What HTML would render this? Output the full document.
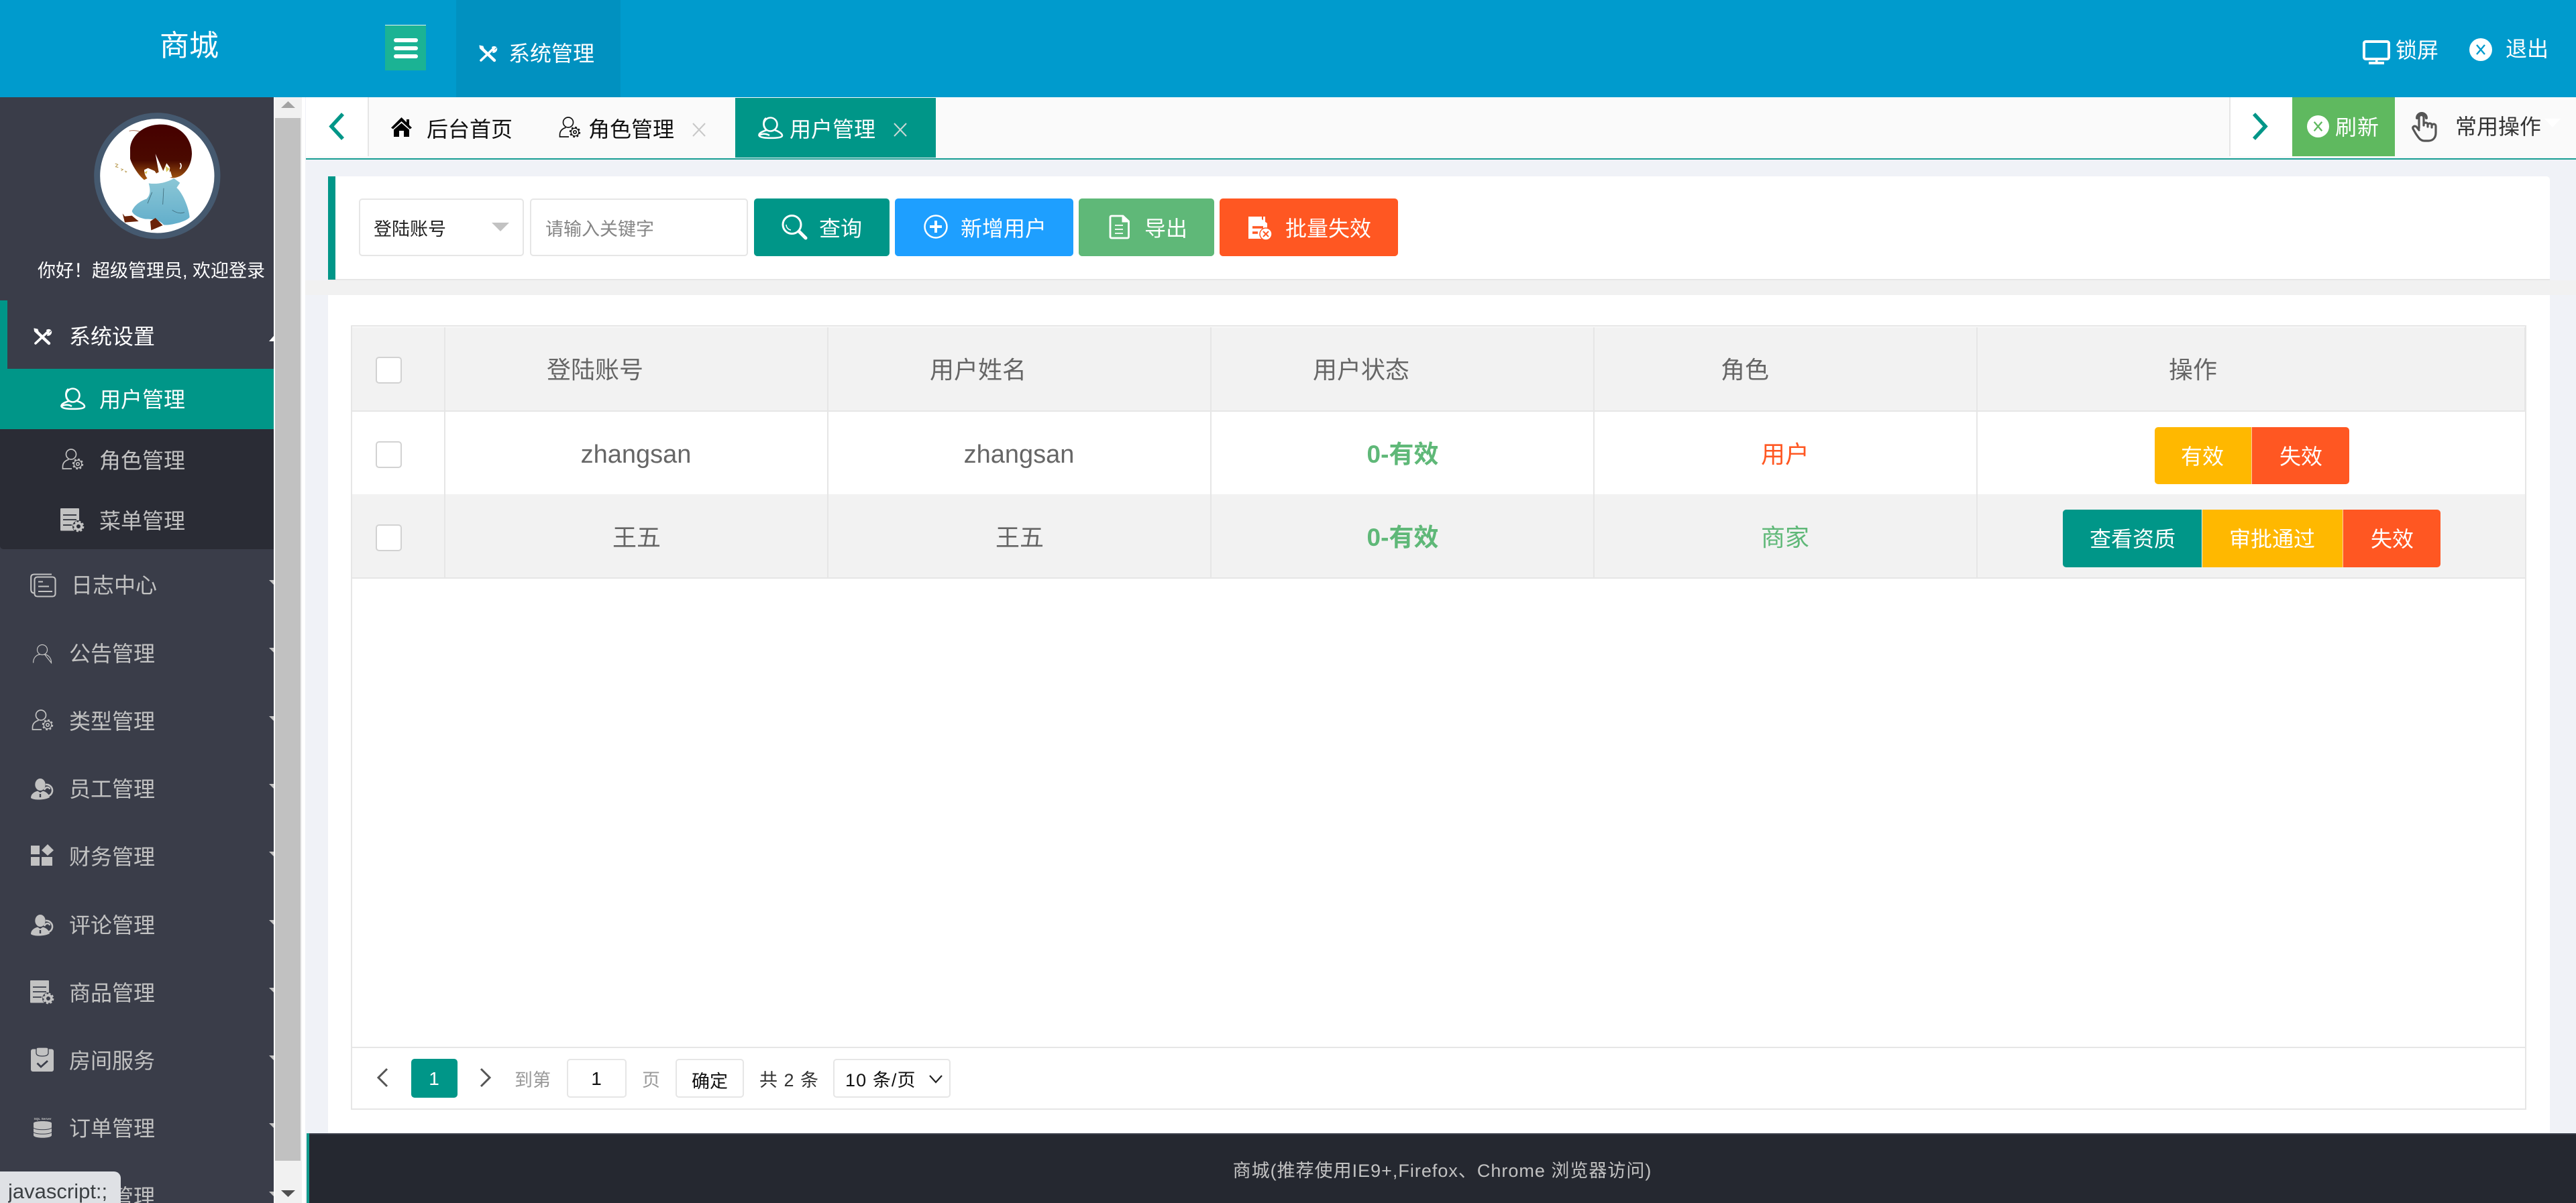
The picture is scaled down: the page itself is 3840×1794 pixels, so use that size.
<!DOCTYPE html>
<html lang="zh-CN"><head><meta charset="utf-8"><title>商城</title>
<style>
html,body{margin:0;padding:0;background:#f0f2f7;width:3840px;height:1794px;overflow:hidden}
body{font-family:"Liberation Sans","Noto Sans CJK SC",sans-serif}
#w{position:absolute;left:0;top:0;width:3840px;height:1794px;overflow:hidden}
.r{position:absolute}
.t{position:absolute;white-space:nowrap;height:60px;line-height:60px;font-size:32px}
.c{transform:translateX(-50%)}
svg{position:absolute;overflow:visible}
.n{color:#c2c2c2}
.h{color:#666;font-size:36px}
.b{border-radius:5px}
</style></head><body><div id="w">
<svg width="0" height="0" style="position:absolute">
<defs>
<symbol id="tools" viewBox="0 0 28 26" overflow="visible"><g fill="none" stroke="currentColor" stroke-linecap="round"><path d="M5 5L24 23" stroke-width="4.4"/><path d="M22 6L4 23" stroke-width="3.6"/><path d="M20.5 3.5a5.5 5.5 0 0 1 6 0l-3.3 3 1.4 1.4 3-2.6a5.5 5.5 0 0 1-6 6" fill="currentColor" stroke-width="1.2"/><path d="M2 1L7 2 9 8 6.500 8.500 2.500 5z" fill="currentColor" stroke-width="1"/></g></symbol>
<symbol id="user2" viewBox="0 0 37 33" overflow="visible"><g fill="none" stroke="currentColor" stroke-width="2.600"><circle cx="18.500" cy="11.500" r="10"/><path d="M12 2C7 6 7 15 13.500 20.500"/><path d="M13 20C6 22 1 25 1.500 28 3 31.500 12 31.800 19 31.800S36 31.500 36 28C36 25 30 21.500 25 20"/><path d="M1.500 28C6 25 13 25 17 28"/></g></symbol>
<symbol id="ug" viewBox="0 0 32 31" overflow="visible"><g fill="none" stroke="currentColor" stroke-width="1.700"><circle cx="14" cy="8.500" r="7.500"/><path d="M15 30H1.500V27C1.500 21.500 5 18 10.500 16.200"/><circle cx="24" cy="23" r="2.200"/><circle cx="24" cy="23" r="5.800" stroke-width="1.300"/><circle cx="24" cy="23" r="7.200" stroke-width="2" stroke-dasharray="2.800 2.850"/></g></symbol>
<symbol id="docg" viewBox="0 0 36 35" overflow="visible"><rect x="0" y="0" width="28" height="33.500" rx="1" fill="currentColor"/><g stroke="var(--bg)" stroke-width="1.700"><path d="M4 10H24M4 17H24M4 25H17"/></g><circle cx="27" cy="27" r="9" fill="var(--bg)"/><circle cx="27" cy="27" r="4.800" fill="none" stroke="currentColor" stroke-width="3.600"/><circle cx="27" cy="27" r="7" fill="none" stroke="currentColor" stroke-width="2.800" stroke-dasharray="3 2.500"/></symbol>
<symbol id="log" viewBox="0 0 39 36" overflow="visible"><g fill="none" stroke="currentColor" stroke-width="2.100"><path d="M32 1.500H6Q1.200 1.500 1.200 6V24Q1.200 29 5.500 29.500"/><rect x="6.500" y="5.500" width="31" height="29" rx="4"/><path d="M12 12.500H19M12 19.500H28M12 27H33"/></g></symbol>
<symbol id="u1" viewBox="0 0 28 28" overflow="visible"><g fill="none" stroke="currentColor" stroke-width="1.200"><circle cx="14" cy="8" r="7.500"/><path d="M.6 27.500C.6 20 5 15.500 10.500 15M17.500 15C23 15.500 27.500 20 27.500 27.500Z"/></g></symbol>
<symbol id="suit" viewBox="0 0 34 32" overflow="visible"><ellipse cx="14" cy="9" rx="7.700" ry="9" fill="currentColor"/><path d="M0 29C0 23 5 20 10 18.500L14 21 18 18.500C23 20 27 23 28 28 22 32 5 33 0 29Z" fill="currentColor"/><path d="M14 23V28" stroke="var(--bg)" stroke-width="2.400"/><path d="M22 9A9 9 0 0 1 32 19 9 9 0 0 1 26 26" fill="none" stroke="currentColor" stroke-width="2.600"/><path d="M20 17C22 12 28 12 28 16" fill="none" stroke="currentColor" stroke-width="2.400"/></symbol>
<symbol id="squares" viewBox="0 0 34 32" overflow="visible"><g fill="currentColor"><rect y="2" width="13" height="13"/><rect y="19" width="13" height="13"/><rect x="16" y="19" width="16" height="13"/><path d="M25 0l9 9-9 8-9-8z"/></g></symbol>
<symbol id="clip" viewBox="0 0 34 36" overflow="visible"><rect y="2.500" width="34" height="33.500" rx="3" fill="currentColor"/><path d="M8 2.500C8 0 10 0 12 0H22C24 0 26 0 26 2.500V8C26 12 22 13 17 13S8 12 8 8Z" fill="currentColor" stroke="var(--bg)" stroke-width="1.300"/><path d="M9.500 23.500L15 29 25 20" fill="none" stroke="var(--bg)" stroke-width="2.800"/></symbol>
<symbol id="db" viewBox="0 0 27 32" overflow="visible"><text x="13.500" y="3.800" font-size="4.800" text-anchor="middle" fill="currentColor" font-weight="700" font-family="Liberation Sans">SQL Server</text><path d="M0 9C0 5 27 5 27 9V27C27 32 0 32 0 27Z" fill="currentColor"/><g fill="none" stroke="var(--bg)" stroke-width="1"><path d="M0 16C4 19.500 23 19.500 27 16M0 22.500C4 26 23 26 27 22.500"/></g></symbol>
<symbol id="xc" viewBox="0 0 34 34" overflow="visible"><circle cx="17" cy="17" r="17" fill="#fff"/><path d="M11 10L23 24M23 10L11 24" stroke="var(--bg)" stroke-width="2.400" fill="none"/></symbol>
</defs></svg>

<!-- top header -->
<div class="r" style="left:0;top:0;width:3840px;height:145px;background:#009bcd"></div>
<div class="t" style="left:238px;top:39px;font-size:44px;color:#fff">商城</div>
<div class="r" style="left:574px;top:37px;width:61px;height:68px;background:#1bb394;border-top:1px solid #e8f4f2;box-sizing:border-box"></div>
<div class="r" style="left:587px;top:57px;width:36px;height:6px;border-radius:3px;background:#fff"></div>
<div class="r" style="left:587px;top:69px;width:36px;height:6px;border-radius:3px;background:#fff"></div>
<div class="r" style="left:587px;top:81px;width:36px;height:6px;border-radius:3px;background:#fff"></div>
<div class="r" style="left:680px;top:0;width:245px;height:145px;background:#0191c0"></div>
<svg style="left:713px;top:67px;color:#fff" width="28" height="26"><use href="#tools"/></svg>
<div class="t" style="left:758px;top:50px;color:#fff">系统管理</div>
<svg style="left:3522px;top:60px" width="41" height="36" viewBox="0 0 41 36"><rect x="2" y="2" width="37" height="26" rx="2.500" fill="none" stroke="#fff" stroke-width="4"/><rect x="19" y="29" width="3.500" height="4" fill="#fff"/><rect x="9" y="32" width="23" height="4" fill="#fff"/></svg>
<div class="t" style="left:3571px;top:45px;color:#fff">锁屏</div>
<svg style="left:3681px;top:57px;--bg:#009bcd" width="34" height="34"><use href="#xc"/></svg>
<div class="t" style="left:3735px;top:43px;color:#fff">退出</div>

<!-- sidebar -->
<div class="r" style="left:0;top:145px;width:408px;height:1649px;background:#3a3d49;overflow:hidden">
<svg style="left:100px;top:-5px" width="300" height="240" viewBox="0 0 900 720">
<defs><linearGradient id="hg" x1="0" y1="0" x2="0" y2="1"><stop offset="0" stop-color="#460000"/><stop offset=".65" stop-color="#4a0a00"/><stop offset="1" stop-color="#a85a10"/></linearGradient><linearGradient id="hd" x1="0" y1="0" x2="0" y2="1"><stop offset="0" stop-color="#8cc7d6"/><stop offset="1" stop-color="#62aecb"/></linearGradient><clipPath id="cc"><circle cx="404" cy="367" r="256"/></clipPath></defs>
<circle cx="403" cy="367" r="269" fill="#fff" stroke="#45596f" stroke-width="27"/>
<g clip-path="url(#cc)">
<path d="M278 166Q300 160 330 170" fill="none" stroke="#a86a50" stroke-width="3"/>
<path d="M282 250C282 190 340 137 420 137C510 137 560 205 558 270C556 320 530 355 505 368C490 375 470 380 455 372L460 330 445 310 430 345 395 268 410 350 345 385C320 365 290 320 282 290Z" fill="url(#hg)"/>
<path d="M345 340L362 332 392 345 395 350C410 375 440 375 462 345L470 372 380 392C360 385 345 365 345 340Z" fill="#fff"/>
<path d="M345 352l14-8-4 14z M440 322l18 14-14 14z" fill="#d8c658"/>
<path d="M505 310q10 10 0 26" fill="none" stroke="#fff" stroke-width="5"/>
<path d="M365 400C400 405 440 400 478 378L505 398 490 420C515 440 545 510 548 552 530 575 450 590 432 586 412 562 380 560 352 560 320 555 295 540 290 525 300 500 325 480 355 470 375 450 372 425 365 400Z" fill="url(#hd)"/>
<path d="M432 422L428 495M380 440L360 490M470 520Q500 540 525 530" stroke="#3f6a7a" stroke-width="2.500" fill="none"/>
<path d="M248 535L258 548 290 545 320 570 258 575Z" fill="#6a2208"/>
<path d="M395 555L428 588 376 610 372 570Z" fill="#6a2208"/>
<path d="M215 312l12 4-10 10 12 3M240 335l10 3-8 6M258 345l8 3-5 4" fill="none" stroke="#b89a50" stroke-width="3"/>
</g>
</svg>
<div class="t" style="left:56px;top:229px;font-size:27px;color:#fff">你好！超级管理员, 欢迎登录</div>

<!-- menu 系统设置 -->
<div class="r" style="left:0;top:303px;width:11px;height:102px;background:#009688"></div>
<svg style="left:49px;top:344px;color:#fff" width="28" height="26"><use href="#tools"/></svg>
<div class="t" style="left:103px;top:327px;color:#fff">系统设置</div>
<div class="r" style="left:401px;top:356px;width:7px;height:8px;background:#fff;clip-path:polygon(0 100%,100% 0,100% 100%)"></div>
<div class="r" style="left:0;top:495px;width:408px;height:179px;background:#2a2c35;border-radius:0 0 0 5px"></div>
<div class="r" style="left:0;top:405px;width:408px;height:90px;background:#009688"></div>
<svg style="left:90px;top:433px;color:#fff" width="37" height="33"><use href="#user2"/></svg>
<div class="t" style="left:148px;top:421px;color:#fff">用户管理</div>
<svg style="left:92px;top:524px" class="n" width="32" height="31"><use href="#ug"/></svg>
<div class="t n" style="left:148px;top:512px">角色管理</div>
<svg style="left:90px;top:613px;--bg:#2a2c35" class="n" width="36" height="35"><use href="#docg"/></svg>
<div class="t n" style="left:148px;top:602px">菜单管理</div>

<svg style="left:45px;top:710px" class="n" width="39" height="36"><use href="#log"/></svg>
<div class="t n" style="left:106px;top:698px">日志中心</div>
<svg style="left:49px;top:816px" class="n" width="28" height="28"><use href="#u1"/></svg>
<div class="t n" style="left:103px;top:800px">公告管理</div>
<svg style="left:47px;top:913px" class="n" width="32" height="31"><use href="#ug"/></svg>
<div class="t n" style="left:103px;top:901px">类型管理</div>
<svg style="left:46px;top:1016px;--bg:#3a3d49" class="n" width="34" height="32"><use href="#suit"/></svg>
<div class="t n" style="left:103px;top:1002px">员工管理</div>
<svg style="left:46px;top:1114px" class="n" width="34" height="32"><use href="#squares"/></svg>
<div class="t n" style="left:103px;top:1103px">财务管理</div>
<svg style="left:46px;top:1219px;--bg:#3a3d49" class="n" width="34" height="32"><use href="#suit"/></svg>
<div class="t n" style="left:103px;top:1205px">评论管理</div>
<svg style="left:45px;top:1317px;--bg:#3a3d49" class="n" width="36" height="35"><use href="#docg"/></svg>
<div class="t n" style="left:103px;top:1306px">商品管理</div>
<svg style="left:46px;top:1417px;--bg:#3a3d49" class="n" width="34" height="36"><use href="#clip"/></svg>
<div class="t n" style="left:103px;top:1407px">房间服务</div>
<svg style="left:50px;top:1521px;--bg:#3a3d49" class="n" width="27" height="32"><use href="#db"/></svg>
<div class="t n" style="left:103px;top:1508px">订单管理</div>
<div class="t n" style="left:103px;top:1610px">系统管理</div>
<div class="r" style="left:401px;top:720px;width:7px;height:7px;background:#c2c2c2;clip-path:polygon(0 0,100% 0,100% 100%)"></div>
<div class="r" style="left:401px;top:821px;width:7px;height:7px;background:#c2c2c2;clip-path:polygon(0 0,100% 0,100% 100%)"></div>
<div class="r" style="left:401px;top:923px;width:7px;height:7px;background:#c2c2c2;clip-path:polygon(0 0,100% 0,100% 100%)"></div>
<div class="r" style="left:401px;top:1024px;width:7px;height:7px;background:#c2c2c2;clip-path:polygon(0 0,100% 0,100% 100%)"></div>
<div class="r" style="left:401px;top:1125px;width:7px;height:7px;background:#c2c2c2;clip-path:polygon(0 0,100% 0,100% 100%)"></div>
<div class="r" style="left:401px;top:1227px;width:7px;height:7px;background:#c2c2c2;clip-path:polygon(0 0,100% 0,100% 100%)"></div>
<div class="r" style="left:401px;top:1328px;width:7px;height:7px;background:#c2c2c2;clip-path:polygon(0 0,100% 0,100% 100%)"></div>
<div class="r" style="left:401px;top:1429px;width:7px;height:7px;background:#c2c2c2;clip-path:polygon(0 0,100% 0,100% 100%)"></div>
<div class="r" style="left:401px;top:1530px;width:7px;height:7px;background:#c2c2c2;clip-path:polygon(0 0,100% 0,100% 100%)"></div>
<div class="r" style="left:401px;top:1632px;width:7px;height:7px;background:#c2c2c2;clip-path:polygon(0 0,100% 0,100% 100%)"></div>
</div>

<!-- scrollbar -->
<div class="r" style="left:408px;top:145px;width:42px;height:1649px;background:#f1f1f1;border-left:2px solid #fff;box-sizing:border-box"></div>
<div class="r" style="left:410px;top:176px;width:38px;height:1555px;background:#c1c1c1"></div>
<div class="r" style="left:419px;top:151px;width:21px;height:10px;background:#a3a3a3;clip-path:polygon(50% 0,100% 100%,0 100%)"></div>
<div class="r" style="left:419px;top:1775px;width:21px;height:10px;background:#505050;clip-path:polygon(0 0,100% 0,50% 100%)"></div>
<div class="r" style="left:450px;top:145px;width:5px;height:1649px;background:#fff"></div>

<!-- tab bar -->
<div class="r" style="left:456px;top:145px;width:3384px;height:90px;background:#fafafa"></div>
<div class="r" style="left:456px;top:236px;width:3384px;height:2px;background:#1aa094"></div>
<div class="r" style="left:456px;top:145px;width:92px;height:88px;background:#fff;border-right:2px solid #e6e6e6"></div>
<svg style="left:488px;top:166px" width="28" height="45" viewBox="0 0 28 45"><path d="M23 4L6 22.500 23 41" fill="none" stroke="#009688" stroke-width="5.500"/></svg>
<svg style="left:583px;top:175px" width="31" height="29" viewBox="0 0 31 29"><path d="M15.500 0L31 15.500 28 17.500 15.500 6 3 17.500 0 15.500Z" fill="#000"/><path d="M15.500 8.500L27 18.500V29H19V20H12V29H4V18.500Z" fill="#000"/><rect x="23" y="3" width="4" height="8" fill="#000"/></svg>
<div class="t" style="left:636px;top:163px;color:#111">后台首页</div>
<svg style="left:833px;top:174px;color:#111" width="32" height="31"><use href="#ug"/></svg>
<div class="t" style="left:877px;top:163px;color:#111">角色管理</div>
<svg style="left:1031px;top:183px" width="22" height="21" viewBox="0 0 22 21"><path d="M2 1L20 20M20 1L2 20" stroke="#c8c8c8" stroke-width="2" fill="none"/></svg>
<div class="r" style="left:1096px;top:146px;width:299px;height:89px;background:#009688"></div>
<svg style="left:1130px;top:174px;color:#fff" width="37" height="33"><use href="#user2"/></svg>
<div class="t" style="left:1177px;top:163px;color:#fff">用户管理</div>
<svg style="left:1331px;top:183px" width="22" height="21" viewBox="0 0 22 21"><path d="M2 1L20 20M20 1L2 20" stroke="#c8d8d5" stroke-width="2" fill="none"/></svg>
<div class="r" style="left:3323px;top:145px;width:94px;height:88px;background:#fff;border-left:2px solid #e6e6e6;box-sizing:border-box"></div>
<svg style="left:3355px;top:166px" width="28" height="45" viewBox="0 0 28 45"><path d="M5 4L22 22.500 5 41" fill="none" stroke="#009688" stroke-width="5.500"/></svg>
<div class="r" style="left:3417px;top:145px;width:153px;height:88px;background:#5fb95f"></div>
<svg style="left:3439px;top:172px;--bg:#5fb95f" width="33" height="33"><use href="#xc"/></svg>
<div class="t" style="left:3481px;top:160px;color:#fff;letter-spacing:1px">刷新</div>
<svg style="left:3595px;top:165px" width="40" height="46" viewBox="0 0 40 46"><g fill="none" stroke="#555" stroke-width="3.200" stroke-linecap="round" stroke-linejoin="round"><path d="M8 11A7 7 0 1 1 22 11" stroke-width="4"/><path d="M11 26V10A3.500 3.500 0 0 1 18 10V22M18 20A3.200 3.200 0 0 1 24 20V24M24 21A3.200 3.200 0 0 1 30 21V25M30 23A3 3 0 0 1 36 23V33C36 40 32 45 25 45H19C13 45 10 40 6 34L2 27C1 24 4 22 7 24L11 29"/></g></svg>
<div class="t" style="left:3660px;top:159px;color:#333">常用操作</div>
<div class="r" style="left:3793px;top:177px;width:24px;height:13px;background:#fff;clip-path:polygon(0 0,100% 0,50% 100%)"></div>

<!-- search card -->
<div class="r" style="left:455px;top:418px;width:3385px;height:22px;background:#f1f1f1"></div>
<div class="r" style="left:489px;top:263px;width:3312px;height:155px;background:#fff;border-bottom:2px solid #e6e6e6;box-sizing:border-box;border-radius:0 5px 0 0"></div>
<div class="r" style="left:489px;top:263px;width:11px;height:154px;background:#009688"></div>
<div class="r b" style="left:535px;top:296px;width:246px;height:86px;border:2.500px solid #e6e6e6;box-sizing:border-box;background:#fff"></div>
<div class="t" style="left:557px;top:312px;font-size:27px;color:#222">登陆账号</div>
<div class="r" style="left:733px;top:332px;width:26px;height:13px;background:#c2c2c2;clip-path:polygon(0 0,100% 0,50% 100%)"></div>
<div class="r b" style="left:790px;top:296px;width:325px;height:86px;border:2.500px solid #e6e6e6;box-sizing:border-box;background:#fff"></div>
<div class="t" style="left:813px;top:312px;font-size:27px;color:#858585">请输入关键字</div>

<div class="r b" style="left:1124px;top:296px;width:202px;height:86px;background:#009688"></div>
<svg style="left:1165px;top:320px" width="38" height="37" viewBox="0 0 38 37"><g fill="none" stroke="#fff"><circle cx="15.500" cy="15" r="13.500" stroke-width="3"/><path d="M7 15A8 8 0 0 0 14 23" stroke-width="1.500"/><path d="M26 25L36 35" stroke-width="5" stroke-linecap="round"/></g></svg>
<div class="t" style="left:1221px;top:311px;color:#fff">查询</div>
<div class="r b" style="left:1334px;top:296px;width:266px;height:86px;background:#1e9fff"></div>
<svg style="left:1377px;top:320px" width="36" height="36" viewBox="0 0 36 36"><circle cx="18" cy="18" r="16.500" fill="none" stroke="#fff" stroke-width="2.500"/><path d="M18 9V27M9 18H27" stroke="#fff" stroke-width="4"/></svg>
<div class="t" style="left:1432px;top:311px;color:#fff">新增用户</div>
<div class="r b" style="left:1608px;top:296px;width:202px;height:86px;background:#5fb878"></div>
<svg style="left:1653px;top:321px" width="31" height="35" viewBox="0 0 31 35"><path d="M2 3Q2 1 4 1H21L29.500 9V32Q29.500 34 27.500 34H4Q2 34 2 32Z" fill="none" stroke="#fff" stroke-width="2.800"/><path d="M20 1V10H29.500" fill="#fff" stroke="#fff" stroke-width="1"/><path d="M9 15H21M9 21H21M9 27H21" stroke="#fff" stroke-width="1.800"/></svg>
<div class="t" style="left:1706px;top:311px;color:#fff">导出</div>
<div class="r b" style="left:1818px;top:296px;width:266px;height:86px;background:#ff5722"></div>
<svg style="left:1861px;top:323px" width="35" height="35" viewBox="0 0 35 35"><path d="M0 0H20V4L28 10V33H0Z" fill="#fff"/><path d="M22 0H25V9H22Z" fill="#fff"/><path d="M6 16H22M6 24H14" stroke="#ff5722" stroke-width="3.500"/><circle cx="26" cy="26" r="9" fill="#fff" stroke="#ff5722" stroke-width="1.500"/><path d="M22 22L30 30M30 22L22 30" stroke="#ff5722" stroke-width="2"/></svg>
<div class="t" style="left:1916px;top:311px;color:#fff">批量失效</div>

<!-- main card -->
<div class="r" style="left:489px;top:440px;width:3312px;height:1250px;background:#fff"></div>
<div class="r" style="left:523px;top:485px;width:3243px;height:1170px;border:2px solid #e6e6e6;box-sizing:border-box"></div>
<div class="r" style="left:525px;top:488px;width:3238px;height:124px;background:#f2f2f2"></div>
<div class="r" style="left:525px;top:612px;width:3239px;height:2px;background:#e6e6e6"></div>
<div class="r" style="left:525px;top:737px;width:3239px;height:124px;background:#f2f2f2"></div>
<div class="r" style="left:525px;top:861px;width:3239px;height:2px;background:#e6e6e6"></div>
<div class="r" style="left:662px;top:488px;width:2px;height:373px;background:#e6e6e6"></div>
<div class="r" style="left:1233px;top:488px;width:2px;height:373px;background:#e6e6e6"></div>
<div class="r" style="left:1804px;top:488px;width:2px;height:373px;background:#e6e6e6"></div>
<div class="r" style="left:2375px;top:488px;width:2px;height:373px;background:#e6e6e6"></div>
<div class="r" style="left:2946px;top:488px;width:2px;height:373px;background:#e6e6e6"></div>
<div class="r" style="left:3763px;top:488px;width:2px;height:124px;background:#e6e6e6"></div>
<div class="r b" style="left:560px;top:532px;width:39px;height:40px;border:2.400px solid #d2d2d2;box-sizing:border-box;background:#fff"></div>
<div class="r b" style="left:560px;top:658px;width:39px;height:40px;border:2.400px solid #d2d2d2;box-sizing:border-box;background:#fff"></div>
<div class="r b" style="left:560px;top:782px;width:39px;height:40px;border:2.400px solid #d2d2d2;box-sizing:border-box;background:#fff"></div>

<div class="t h" style="left:815px;top:522px">登陆账号</div>
<div class="t h" style="left:1386px;top:522px">用户姓名</div>
<div class="t h" style="left:1957px;top:522px">用户状态</div>
<div class="t h" style="left:2565px;top:522px">角色</div>
<div class="t h" style="left:3233px;top:522px">操作</div>

<div class="t h c" style="left:948px;top:648px;font-size:38px">zhangsan</div>
<div class="t h c" style="left:1519px;top:648px;font-size:38px">zhangsan</div>
<div class="t c" style="left:2091px;top:648px;font-size:37px;font-weight:700;color:#5fb878">0-有效</div>
<div class="t" style="left:2625px;top:648px;font-size:36px;color:#ff5722">用户</div>
<div class="r" style="left:3212px;top:637px;width:144px;height:85px;background:#ffb800;border-radius:5px 0 0 5px"></div>
<div class="r" style="left:3356px;top:637px;width:146px;height:85px;background:#ff5722;border-left:1px solid #ffc9a8;box-sizing:border-box;border-radius:0 5px 5px 0"></div>
<div class="t c" style="left:3283px;top:651px;color:#fff">有效</div>
<div class="t c" style="left:3430px;top:651px;color:#fff">失效</div>

<div class="t h c" style="left:949px;top:772px">王五</div>
<div class="t h c" style="left:1520px;top:772px">王五</div>
<div class="t c" style="left:2091px;top:772px;font-size:37px;font-weight:700;color:#5fb878">0-有效</div>
<div class="t" style="left:2625px;top:772px;font-size:36px;color:#5fb878">商家</div>
<div class="r" style="left:3075px;top:760px;width:207px;height:86px;background:#009688;border-radius:5px 0 0 5px"></div>
<div class="r" style="left:3283px;top:760px;width:209px;height:86px;background:#ffb800"></div>
<div class="r" style="left:3492px;top:760px;width:146px;height:86px;background:#ff5722;border-left:1px solid #ffc9a8;box-sizing:border-box;border-radius:0 5px 5px 0"></div>
<div class="t c" style="left:3179px;top:774px;color:#fff">查看资质</div>
<div class="t c" style="left:3387px;top:774px;color:#fff">审批通过</div>
<div class="t c" style="left:3566px;top:774px;color:#fff">失效</div>

<!-- pager -->
<div class="r" style="left:525px;top:1561px;width:3239px;height:2px;background:#e6e6e6"></div>
<svg style="left:560px;top:1592px" width="20" height="30" viewBox="0 0 20 30"><path d="M17 2L4 15 17 28" fill="none" stroke="#555" stroke-width="3"/></svg>
<div class="r b" style="left:613px;top:1579px;width:69px;height:58px;background:#009688"></div>
<div class="t c" style="left:647px;top:1579px;font-size:28px;color:#fff">1</div>
<svg style="left:714px;top:1592px" width="20" height="30" viewBox="0 0 20 30"><path d="M3 2L16 15 3 28" fill="none" stroke="#555" stroke-width="3"/></svg>
<div class="t" style="left:767px;top:1581px;font-size:27px;color:#999">到第</div>
<div class="r b" style="left:845px;top:1579px;width:89px;height:58px;border:2.400px solid #e6e6e6;box-sizing:border-box;background:#fff"></div>
<div class="t c" style="left:889px;top:1579px;font-size:28px;color:#111">1</div>
<div class="t" style="left:957px;top:1581px;font-size:27px;color:#999">页</div>
<div class="r b" style="left:1007px;top:1579px;width:102px;height:58px;border:2.400px solid #e6e6e6;box-sizing:border-box;background:#fff"></div>
<div class="t" style="left:1031px;top:1583px;font-size:27px;color:#111">确定</div>
<div class="t" style="left:1132px;top:1581px;font-size:27px;color:#333;word-spacing:2px">共 2 条</div>
<div class="r b" style="left:1242px;top:1579px;width:175px;height:58px;border:2.400px solid #e6e6e6;box-sizing:border-box;background:#fff"></div>
<div class="t" style="left:1260px;top:1581px;font-size:27px;color:#111;letter-spacing:1.100px">10 条/页</div>
<svg style="left:1384px;top:1602px" width="22" height="14" viewBox="0 0 22 14"><path d="M2 2L11 12 20 2" fill="none" stroke="#222" stroke-width="2.200"/></svg>

<!-- footer -->
<div class="r" style="left:457px;top:1690px;width:3383px;height:104px;background:#252830"></div>
<div class="r" style="left:461px;top:1690px;width:3379px;height:2px;background:#393d49"></div>
<div class="r" style="left:457px;top:1690px;width:4px;height:104px;background:#129a8c"></div>
<div class="t c" style="left:2150px;top:1716px;font-size:27px;color:#c2c2c2;letter-spacing:1px">商城(推荐使用IE9+,Firefox、Chrome 浏览器访问)</div>

<!-- status tooltip -->
<div class="r" style="left:0;top:1747px;width:180px;height:47px;background:#dfe1e5;border-radius:0 10px 0 0"></div>
<div class="r" style="left:12px;top:1747px;height:47px;overflow:hidden;white-space:nowrap;line-height:60px;font-size:31px;color:#3c4043">javascript:;</div>
</div></body></html>
